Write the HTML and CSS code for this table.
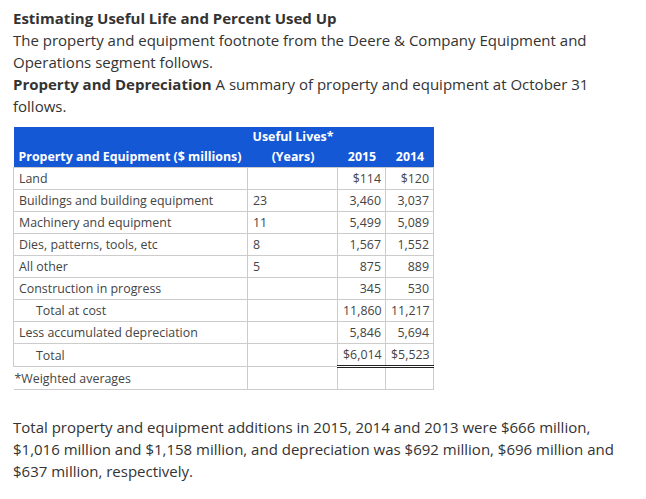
FILE: index.html
```html
<!DOCTYPE html>
<html>
<head>
<meta charset="utf-8">
<link rel="stylesheet" href="styles.css">
</head>
<body>
<div class="page">
  <div class="intro">
    <div class="title">Estimating Useful Life and Percent Used Up</div>
    <div>The property and equipment footnote from the Deere &amp; Company Equipment and Operations segment follows.</div>
    <div><b>Property and Depreciation</b> A summary of property and equipment at October 31 follows.</div>
  </div>
  <table class="pe">
    <colgroup>
      <col class="c1"><col class="c2"><col class="c3"><col class="c4">
    </colgroup>
    <thead>
      <tr>
        <th class="hl">Property and Equipment ($ millions)</th>
        <th class="hc">Useful Lives*<br>(Years)</th>
        <th class="hc">2015</th>
        <th class="hc">2014</th>
      </tr>
    </thead>
    <tbody>
      <tr><td>Land</td><td></td><td class="n">$114</td><td class="n">$120</td></tr>
      <tr><td>Buildings and building equipment</td><td>23</td><td class="n">3,460</td><td class="n">3,037</td></tr>
      <tr><td>Machinery and equipment</td><td>11</td><td class="n">5,499</td><td class="n">5,089</td></tr>
      <tr><td>Dies, patterns, tools, etc</td><td>8</td><td class="n">1,567</td><td class="n">1,552</td></tr>
      <tr><td>All other</td><td>5</td><td class="n">875</td><td class="n">889</td></tr>
      <tr><td>Construction in progress</td><td></td><td class="n">345</td><td class="n">530</td></tr>
      <tr><td class="ind">Total at cost</td><td></td><td class="n top">11,860</td><td class="n top">11,217</td></tr>
      <tr><td>Less accumulated depreciation</td><td></td><td class="n">5,846</td><td class="n">5,694</td></tr>
      <tr><td class="ind">Total</td><td></td><td class="n top dbl">$6,014</td><td class="n top dbl">$5,523</td></tr>
      <tr><td class="foot">*Weighted averages</td><td></td><td></td><td></td></tr>
    </tbody>
  </table>
  <p class="outro">Total property and equipment additions in 2015, 2014 and 2013 were $666 million, $1,016 million and $1,158 million, and depreciation was $692 million, $696 million and $637 million, respectively.</p>
</div>
</body>
</html>
```
FILE: styles.css
```css
html, body {
  margin: 0;
  padding: 0;
  background: #fff;
}
.page {
  padding: 7px 13px 0 13px;
  font-family: "Open Sans", "Noto Sans", sans-serif;
  font-size: 15px;
  line-height: 22px;
  color: #333;
  width: 615px;
}
.intro {
  width: 600px;
}
.title, b {
  font-weight: bold;
}
.pe {
  margin-top: 10px;
  border-collapse: collapse;
  table-layout: fixed;
  width: 420px;
  font-size: 12.4px;
  line-height: 17px;
  color: #444;
}
.c1 { width: 234px; }
.c2 { width: 90px; }
.c3 { width: 48px; }
.c4 { width: 48px; }
.pe th {
  background: #1558d6;
  color: #fff;
  font-weight: bold;
  padding: 0 4px 0 5px;
  line-height: 20px;
  vertical-align: bottom;
  border: none;
  white-space: nowrap;
}
.pe th.hl { text-align: left; }
.pe th.hc { text-align: center; }
.pe td {
  border: 1px solid #ccc;
  padding: 2px 4px 2px 5px;
  height: 17px;
  white-space: nowrap;
}
.pe td.n { text-align: right; }
.pe td.ind { padding-left: 22px; }
.pe td.top { border-top: 1px solid #222; }
.pe td.dbl { border-bottom: 3px double #222; }
.pe td.foot { border-left: none; padding-left: 1px; }
.outro {
  margin: 26px 0 0 0;
}
```
